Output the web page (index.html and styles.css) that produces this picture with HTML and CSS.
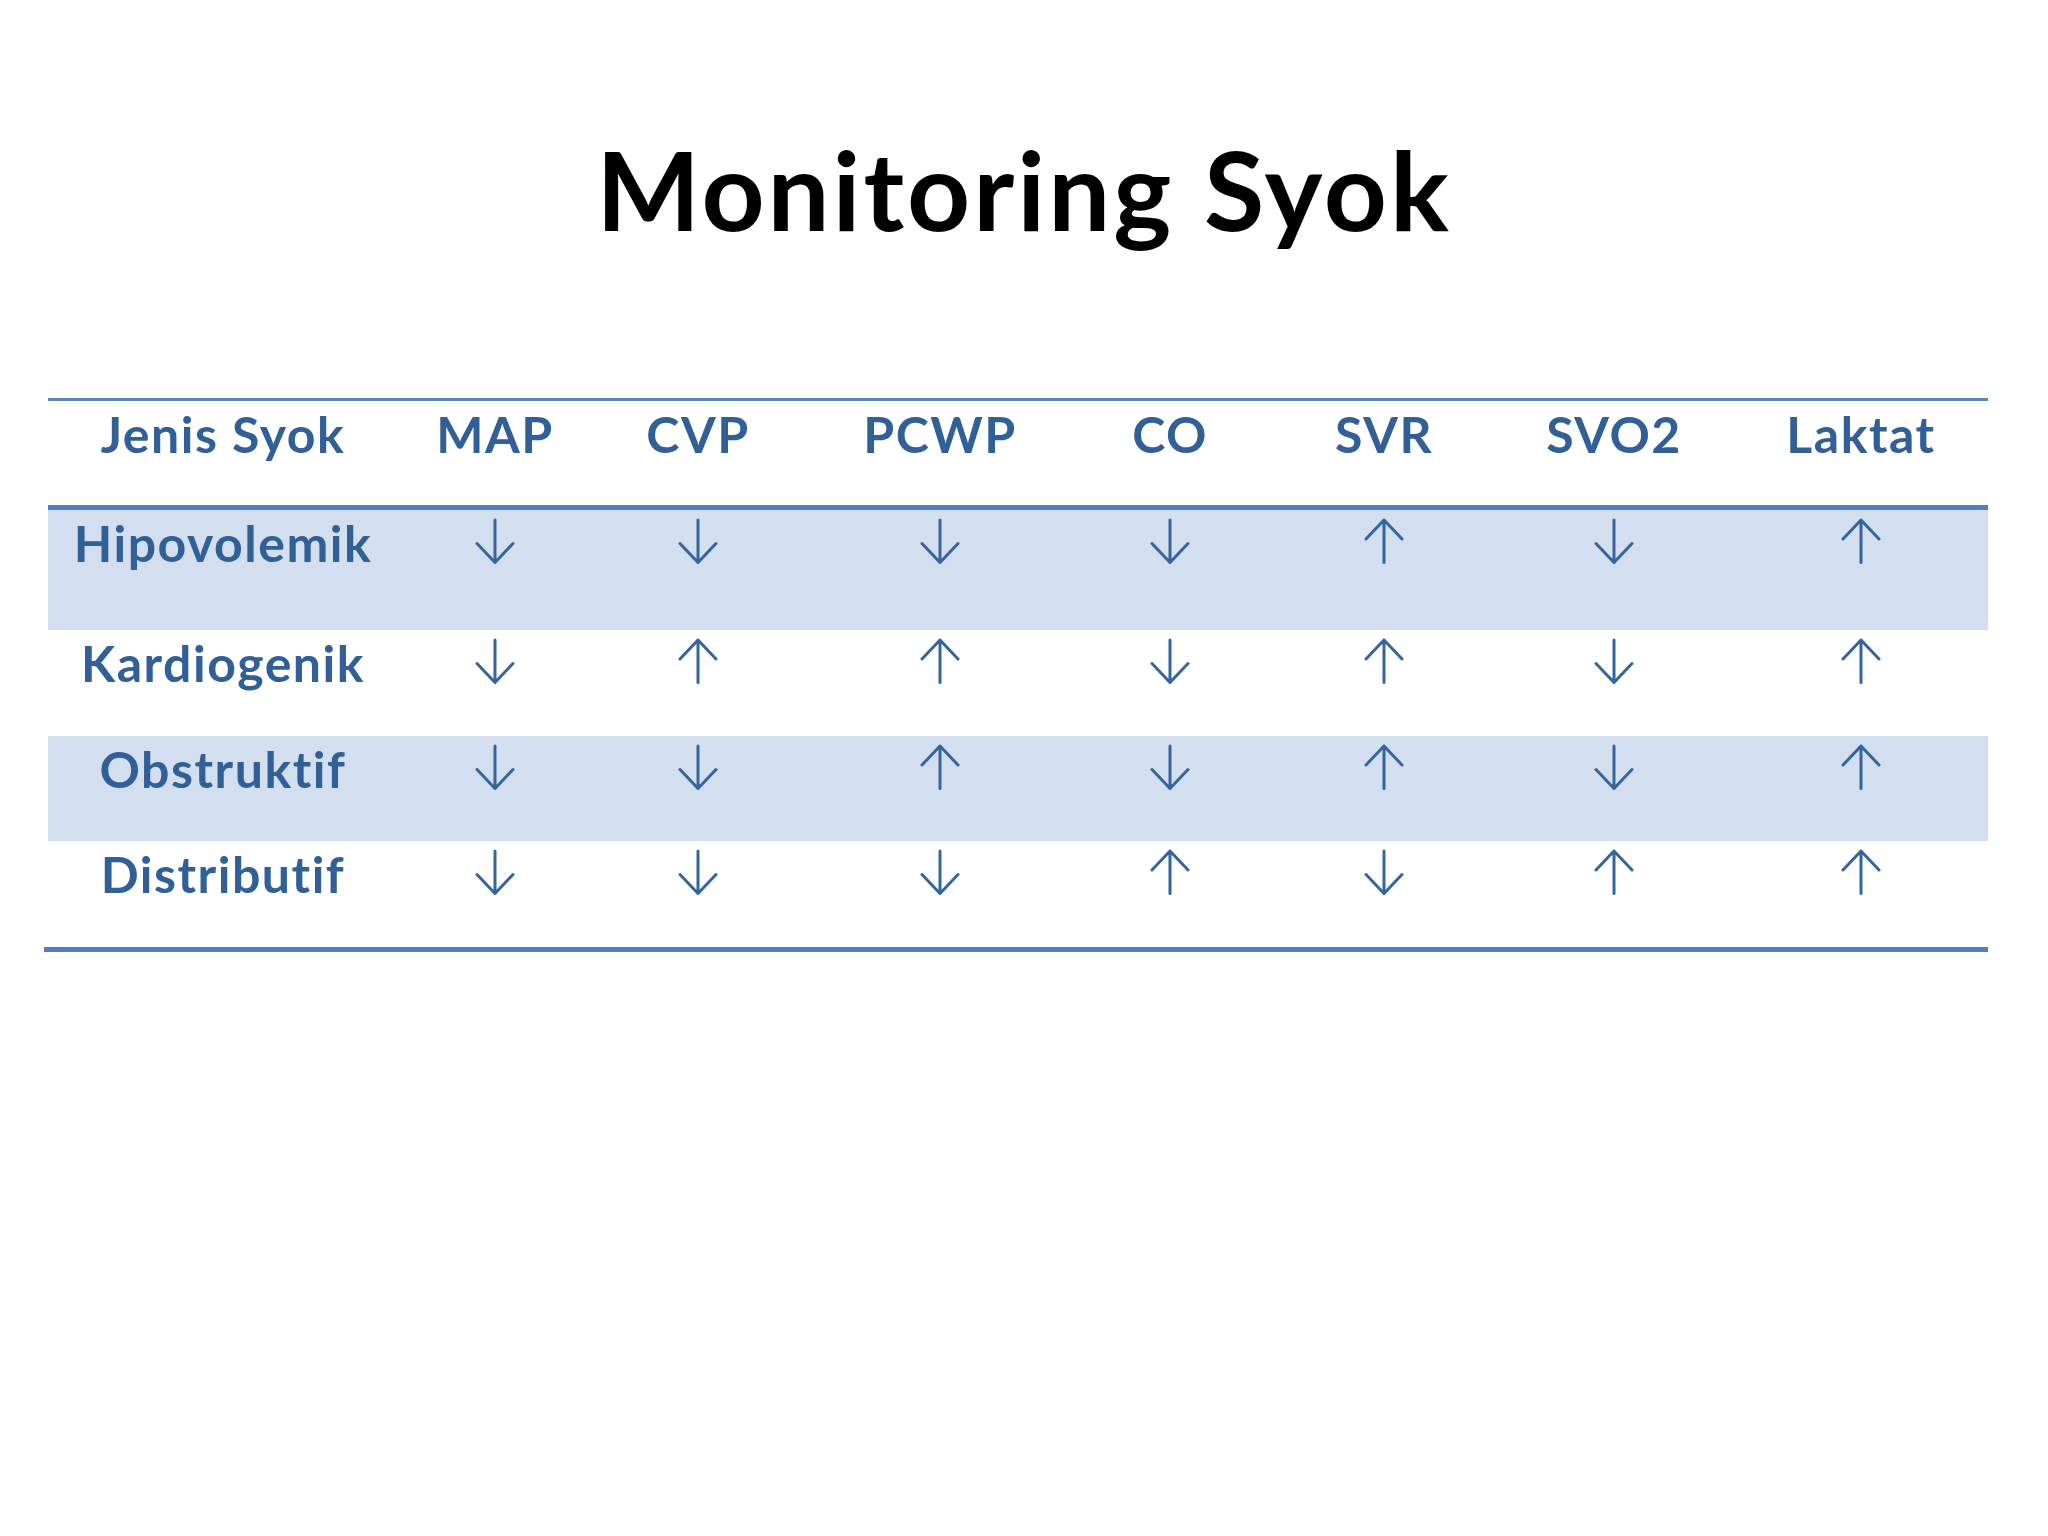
FILE: index.html
```html
<!DOCTYPE html>
<html lang="id">
<head>
<meta charset="utf-8">
<title>Monitoring Syok</title>
<link rel="stylesheet" href="styles.css">
</head>
<body>
<svg class="defs" width="0" height="0" aria-hidden="true">
  <defs>
    <g id="down"><path d="M20 2 V44.5 M2 25.5 L20 44.5 L38 25.5"/></g>
    <g id="up"><path d="M20 44.5 V2 M2 21 L20 2 L38 21"/></g>
  </defs>
</svg>
<main class="slide">
  <h1 class="title">Monitoring Syok</h1>
  <div class="table">
    <div class="row head">
      <div class="cell name">Jenis Syok</div>
      <div class="cell">MAP</div>
      <div class="cell">CVP</div>
      <div class="cell">PCWP</div>
      <div class="cell">CO</div>
      <div class="cell">SVR</div>
      <div class="cell">SVO2</div>
      <div class="cell">Laktat</div>
    </div>
    <div class="row band tall">
      <div class="cell name">Hipovolemik</div>
      <div class="cell arr"><svg class="arrow" viewBox="0 0 40 46" role="img" aria-label="↓"><use href="#down"/></svg></div>
      <div class="cell arr"><svg class="arrow" viewBox="0 0 40 46" role="img" aria-label="↓"><use href="#down"/></svg></div>
      <div class="cell arr"><svg class="arrow" viewBox="0 0 40 46" role="img" aria-label="↓"><use href="#down"/></svg></div>
      <div class="cell arr"><svg class="arrow" viewBox="0 0 40 46" role="img" aria-label="↓"><use href="#down"/></svg></div>
      <div class="cell arr"><svg class="arrow" viewBox="0 0 40 46" role="img" aria-label="↑"><use href="#up"/></svg></div>
      <div class="cell arr"><svg class="arrow" viewBox="0 0 40 46" role="img" aria-label="↓"><use href="#down"/></svg></div>
      <div class="cell arr"><svg class="arrow" viewBox="0 0 40 46" role="img" aria-label="↑"><use href="#up"/></svg></div>
    </div>
    <div class="row">
      <div class="cell name">Kardiogenik</div>
      <div class="cell arr"><svg class="arrow" viewBox="0 0 40 46" role="img" aria-label="↓"><use href="#down"/></svg></div>
      <div class="cell arr"><svg class="arrow" viewBox="0 0 40 46" role="img" aria-label="↑"><use href="#up"/></svg></div>
      <div class="cell arr"><svg class="arrow" viewBox="0 0 40 46" role="img" aria-label="↑"><use href="#up"/></svg></div>
      <div class="cell arr"><svg class="arrow" viewBox="0 0 40 46" role="img" aria-label="↓"><use href="#down"/></svg></div>
      <div class="cell arr"><svg class="arrow" viewBox="0 0 40 46" role="img" aria-label="↑"><use href="#up"/></svg></div>
      <div class="cell arr"><svg class="arrow" viewBox="0 0 40 46" role="img" aria-label="↓"><use href="#down"/></svg></div>
      <div class="cell arr"><svg class="arrow" viewBox="0 0 40 46" role="img" aria-label="↑"><use href="#up"/></svg></div>
    </div>
    <div class="row band short">
      <div class="cell name">Obstruktif</div>
      <div class="cell arr"><svg class="arrow" viewBox="0 0 40 46" role="img" aria-label="↓"><use href="#down"/></svg></div>
      <div class="cell arr"><svg class="arrow" viewBox="0 0 40 46" role="img" aria-label="↓"><use href="#down"/></svg></div>
      <div class="cell arr"><svg class="arrow" viewBox="0 0 40 46" role="img" aria-label="↑"><use href="#up"/></svg></div>
      <div class="cell arr"><svg class="arrow" viewBox="0 0 40 46" role="img" aria-label="↓"><use href="#down"/></svg></div>
      <div class="cell arr"><svg class="arrow" viewBox="0 0 40 46" role="img" aria-label="↑"><use href="#up"/></svg></div>
      <div class="cell arr"><svg class="arrow" viewBox="0 0 40 46" role="img" aria-label="↓"><use href="#down"/></svg></div>
      <div class="cell arr"><svg class="arrow" viewBox="0 0 40 46" role="img" aria-label="↑"><use href="#up"/></svg></div>
    </div>
    <div class="row">
      <div class="cell name">Distributif</div>
      <div class="cell arr"><svg class="arrow" viewBox="0 0 40 46" role="img" aria-label="↓"><use href="#down"/></svg></div>
      <div class="cell arr"><svg class="arrow" viewBox="0 0 40 46" role="img" aria-label="↓"><use href="#down"/></svg></div>
      <div class="cell arr"><svg class="arrow" viewBox="0 0 40 46" role="img" aria-label="↓"><use href="#down"/></svg></div>
      <div class="cell arr"><svg class="arrow" viewBox="0 0 40 46" role="img" aria-label="↑"><use href="#up"/></svg></div>
      <div class="cell arr"><svg class="arrow" viewBox="0 0 40 46" role="img" aria-label="↓"><use href="#down"/></svg></div>
      <div class="cell arr"><svg class="arrow" viewBox="0 0 40 46" role="img" aria-label="↑"><use href="#up"/></svg></div>
      <div class="cell arr"><svg class="arrow" viewBox="0 0 40 46" role="img" aria-label="↑"><use href="#up"/></svg></div>
    </div>
    <div class="rule"></div>
  </div>
</main>
</body>
</html>
```

FILE: styles.css
```css
html, body {
  margin: 0;
  padding: 0;
  background: #ffffff;
}

.defs {
  position: absolute;
  width: 0;
  height: 0;
  overflow: hidden;
}

.slide {
  width: 2048px;
  height: 1536px;
  overflow: hidden;
  display: flex;
  flex-direction: column;
  font-family: Lato, "Open Sans", "Liberation Sans", sans-serif;
  font-variant-ligatures: none;
}

.title {
  margin: 122px 0 0 0;
  font-family: Lato, "Liberation Sans", sans-serif;
  font-weight: 700;
  font-size: 110px;
  line-height: 132px;
  color: #000000;
  text-align: center;
  letter-spacing: 3px;
}

.table {
  margin: 144px 0 0 48px;
  width: 1940px;
  border-top: 3px solid #5a86bb;
  display: flex;
  flex-direction: column;
}

.row {
  display: grid;
  grid-template-columns: 360px 174px 232px 252px 208px 220px 240px 254px;
  height: 106px;
}

.row.head {
  height: 104px;
  border-bottom: 5px solid #4f7fbd;
}

.row.tall {
  height: 120px;
}

.row.short {
  height: 105px;
}

.row.band {
  background: #d3dfee;
}

.cell {
  box-sizing: border-box;
  padding-top: 3px;
  font-weight: 700;
  font-size: 50px;
  line-height: 60px;
  color: #315f97;
  text-align: center;
  white-space: nowrap;
  letter-spacing: 1.5px;
}

.cell.name {
  padding-right: 10px;
}

.cell.arr {
  padding-top: 8px;
  display: flex;
  justify-content: center;
  align-items: flex-start;
}

.arrow {
  width: 40px;
  height: 46px;
  fill: none;
  stroke: #34659e;
  stroke-width: 3;
  stroke-linecap: round;
  stroke-linejoin: round;
}

.rule {
  margin-left: -4px;
  width: 1944px;
  height: 5px;
  background: #4f7fbd;
}
```
